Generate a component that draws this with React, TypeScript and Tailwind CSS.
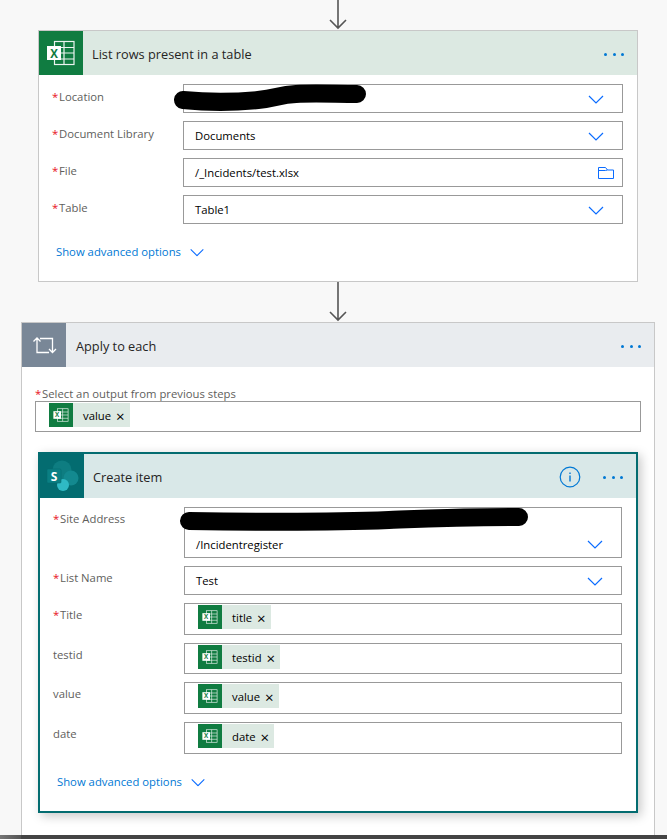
import type { ReactNode } from 'react';

const ExcelIcon = ({ size }: { size: number }) => (
  <svg width={size} height={size} viewBox="0 0 44 44" className="shrink-0">
    <rect width="44" height="44" fill="#107c41" />
    <g fill="none" stroke="#fff" strokeWidth="1.2" opacity="0.92">
      <rect x="15.5" y="10.5" width="19.5" height="23" />
      <path d="M25 10.5v23M15.5 16.5H35M15.5 22H35M15.5 28H35" />
    </g>
    <rect x="8" y="15" width="14" height="14" fill="#fff" />
    <text x="15" y="26.5" textAnchor="middle" fontSize="11.500" fontWeight="700" fill="#107c41" fontFamily="Open Sans">X</text>
  </svg>
);

const SharePointIcon = () => (
  <svg width="46" height="44" viewBox="0 0 46 44" className="shrink-0">
    <rect width="46" height="44" fill="#036c70" />
    <circle cx="24" cy="16" r="9.5" fill="#0e7d81" />
    <circle cx="33" cy="24" r="7.5" fill="#13898f" />
    <circle cx="25" cy="31" r="6" fill="#2fbac4" />
    <rect x="9" y="15" width="14" height="14" rx="1" fill="#0a7f83" stroke="#036c70" strokeWidth="0.6" />
    <text x="16" y="26.5" textAnchor="middle" fontSize="12" fontWeight="700" fill="#fff" fontFamily="Open Sans">S</text>
  </svg>
);

const RepeatIcon = () => (
  <svg width="44" height="44" viewBox="0 0 44 44" className="shrink-0 bg-[#798797]">
    <path d="M15 16v13.500h12M11.500 18.500l3.500-3.500 3.500 3.500M18 15.500h12.500V29M27 26l3.500 3.500 3.500-3.500" fill="none" stroke="#fff" strokeWidth="1.3" />
  </svg>
);

const Chevron = ({ className = '' }: { className?: string }) => (
  <svg width="16" height="9" viewBox="0 0 16 9" className={className}>
    <path d="M1 1l7 7 7-7" fill="none" stroke="#0b6cff" strokeWidth="1.2" />
  </svg>
);

const FolderIcon = () => (
  <svg width="16" height="12" viewBox="0 0 16 12">
    <path d="M.5 11.500V.5h7l2 2.500h6v8.500zM.5 3.500h7l2-.5" fill="none" stroke="#0b6cff" strokeWidth="1" />
  </svg>
);

const MoreDots = () => (
  <div className="flex gap-[5.5px] pt-[2px]">
    <span className="size-[3px] rounded-full bg-[#0078d4]" />
    <span className="size-[3px] rounded-full bg-[#0078d4]" />
    <span className="size-[3px] rounded-full bg-[#0078d4]" />
  </div>
);

const Arrow = ({ height }: { height: number }) => (
  <div className="flex justify-center pl-[9px]">
    <svg width="20" height={height} viewBox={`0 0 20 ${height}`} className="block">
      <path d={`M10 0v${height - 2}M2 ${height - 10}l8 8 8-8`} fill="none" stroke="#555" strokeWidth="1.6" />
    </svg>
  </div>
);

const Token = ({ label }: { label: string }) => (
  <div className="flex h-6 items-center bg-[#dce9e2]">
    <ExcelIcon size={24} />
    <span className="pl-[10px] pt-[2px] text-[11.3px] text-black">{label}</span>
    <span className="px-[5px] pt-[2px] text-[15px] leading-none text-black">×</span>
  </div>
);

const Label = ({ text, required, width }: { text: string; required?: boolean; width: number }) => (
  <div className="flex shrink-0 items-baseline text-[11.3px] leading-[15px] text-[#605e5c]" style={{ width }}>
    {required && <span className="w-[7px] text-[#e81123]">*</span>}
    {text}
  </div>
);

const Field = ({ label, required, labelTop, height, width, children }: { label: string; required?: boolean; labelTop: string; height: string; width: number; children: ReactNode }) => (
  <div className="flex">
    <div className={labelTop}>
      <Label text={label} required={required} width={width} />
    </div>
    <div className={`flex min-w-0 flex-1 items-center justify-between border border-[#999] bg-white ${height}`}>{children}</div>
  </div>
);

const Value = ({ text }: { text: string }) => <span className="pl-[11px] pt-[2px] text-[11.3px] text-black">{text}</span>;

const Advanced = ({ className }: { className: string }) => (
  <div className={`flex items-center gap-[8px] text-[11.3px] text-[#0078d4] ${className}`}>
    Show advanced options
    <Chevron className="scale-90" />
  </div>
);

export default function App() {
  return (
    <div className="flex h-[839px] w-[667px] flex-col overflow-hidden bg-[#f8f8f8] font-['Open_Sans',sans-serif]">
      <Arrow height={30} />

      {/* List rows */}
      <section className="relative ml-[38px] h-[252px] w-[600px] border border-[#c8c8c8] bg-white">
        <header className="flex h-[44px] items-center bg-[#dce9e2]">
          <ExcelIcon size={44} />
          <h2 className="flex-1 pl-[9px] pt-[4px] text-[12.75px] text-[#252423]">List rows present in a table</h2>
          <div className="pr-[13px]"><MoreDots /></div>
        </header>
        <div className="flex flex-col gap-2 pt-[9px] pl-[13px] pr-[14px]">
          <Field label="Location" required labelTop="pt-[5px]" height="h-[29px]" width={131}>
            <span />
            <Chevron className="mr-[18px] mt-[2px]" />
          </Field>
          <Field label="Document Library" required labelTop="pt-[5px]" height="h-[29px]" width={131}>
            <Value text="Documents" />
            <Chevron className="mr-[18px] mt-[2px]" />
          </Field>
          <Field label="File" required labelTop="pt-[5px]" height="h-[29px]" width={131}>
            <Value text="/_Incidents/test.xlsx" />
            <span className="mr-[8px]"><FolderIcon /></span>
          </Field>
          <Field label="Table" required labelTop="pt-[5px]" height="h-[29px]" width={131}>
            <Value text="Table1" />
            <Chevron className="mr-[18px] mt-[2px]" />
          </Field>
        </div>
        <Advanced className="pl-[17px] pt-[20px]" />
        {/* redacted */}
        <svg width="210" height="30" viewBox="0 0 210 30" className="absolute left-[130px] top-[52px]">
          <path d="M14 17c30 3 55 2 75 0s20-5 38-6 40 0 61 0" fill="none" stroke="#000" strokeWidth="18" strokeLinecap="round" />
        </svg>
      </section>

      <Arrow height={40} />

      {/* Apply to each */}
      <section className="ml-[21px] w-[634px] flex-1 border-x border-t border-[#c8c8c8] bg-white">
        <header className="flex h-[44px] items-center bg-[#e9ecef]">
          <RepeatIcon />
          <h2 className="flex-1 pl-[10px] pt-[4px] text-[12.75px] text-[#252423]">Apply to each</h2>
          <div className="pr-[13px]"><MoreDots /></div>
        </header>
        <div className="pl-[13px] pt-[19px]">
          <Label text="Select an output from previous steps" required width={500} />
          <div className="mr-[13px] flex h-[31px] items-start border border-[#999] pl-[13px] pt-px">
            <Token label="value" />
          </div>
        </div>

        {/* Create item */}
        <div className="relative ml-[16px] mt-[20px] h-[361px] w-[600px] border-2 border-[#036c70] bg-white shadow-[3px_3px_10px_rgba(0,0,0,0.22)]">
          <header className="-ml-[2px] flex h-[44px] items-center bg-[#d9e8e8]">
            <SharePointIcon />
            <h2 className="flex-1 pl-[9px] pt-[4px] text-[12.75px] text-[#252423]">Create item</h2>
            <svg width="22" height="22" viewBox="0 0 22 22" className="mr-[22px] mt-px">
              <circle cx="11" cy="11" r="9.800" fill="none" stroke="#0078d4" strokeWidth="1.200" />
              <path d="M11 9.500v6M11 6.500v1.500" stroke="#0078d4" strokeWidth="1.400" />
            </svg>
            <div className="pr-[13px]"><MoreDots /></div>
          </header>
          <div className="flex flex-col gap-2 pt-[9px] pl-[13px] pr-[14px]">
            <Field label="Site Address" required labelTop="pt-[4px]" height="h-[51px] !items-end" width={131}>
              <span className="pb-[3px] pl-[11px] text-[11.3px] text-black">/Incidentregister</span>
              <Chevron className="mb-[8px] mr-[18px]" />
            </Field>
            <Field label="List Name" required labelTop="pt-[4px]" height="h-[29px]" width={131}>
              <Value text="Test" />
              <Chevron className="mr-[18px] mt-[2px]" />
            </Field>
            <Field label="Title" required labelTop="pt-[4px]" height="h-[32px] !items-start !justify-start pl-[13px] pt-px" width={131}>
              <Token label="title" />
            </Field>
            <Field label="testid" labelTop="pt-[4px]" height="h-[31px] !items-start !justify-start pl-[13px] pt-px" width={131}>
              <Token label="testid" />
            </Field>
            <Field label="value" labelTop="pt-[4px]" height="h-[32px] !items-start !justify-start pl-[13px] pt-px" width={131}>
              <Token label="value" />
            </Field>
            <Field label="date" labelTop="pt-[4px]" height="h-[32px] !items-start !justify-start pl-[13px] pt-px" width={131}>
              <Token label="date" />
            </Field>
          </div>
          <Advanced className="pl-[17px] pt-[20px]" />
          {/* redacted */}
          <svg width="360" height="30" viewBox="0 0 360 30" className="absolute left-[135px] top-[50px]">
            <path d="M14 17c70 1 150 1 200-1s70-3 130-3" fill="none" stroke="#000" strokeWidth="18" strokeLinecap="round" />
          </svg>
        </div>
      </section>

      <div className="flex h-[4px] bg-[#444]">
        <div className="w-[21px] bg-gradient-to-r from-[#777] to-[#555]" />
      </div>
    </div>
  );
}
